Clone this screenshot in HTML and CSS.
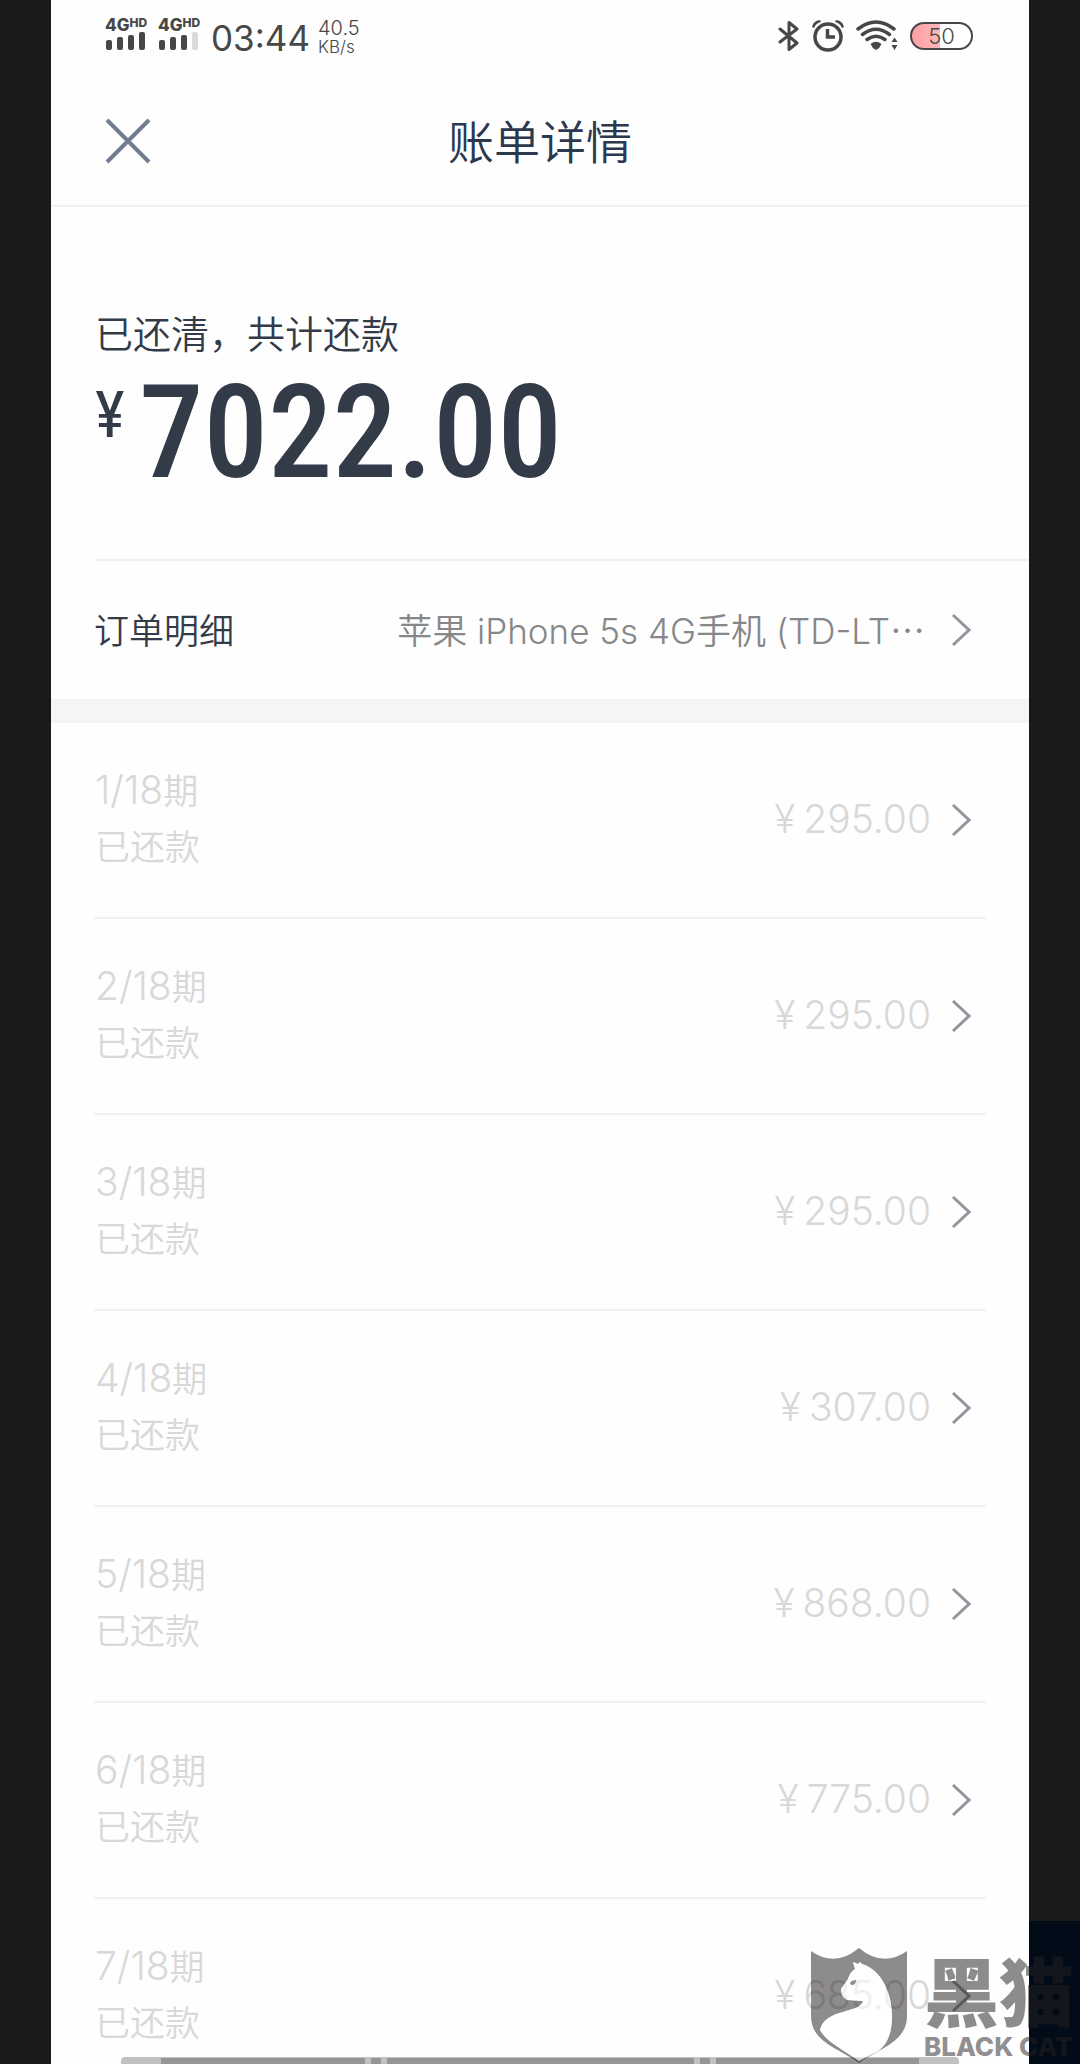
FILE: index.html
```html
<!DOCTYPE html>
<html lang="zh-CN">

<head>
    <meta charset="UTF-8">
    <meta name="viewport" content="width=device-width, initial-scale=1.0">
    <title>账单详情</title>
    <link rel="stylesheet" href="styles.css">
</head>

<body>
    <div class="viewer">
        <div class="screen">
            <div class="status">
                <div class="signal">
                    <span class="net">4G<sup>HD</sup></span>
                    <svg width="42" height="18" viewBox="0 0 42 18" fill="#474747">
                        <rect x="1" y="8" width="6" height="10" rx="2" />
                        <rect x="12" y="5" width="6" height="13" rx="2" />
                        <rect x="23" y="3" width="6" height="15" rx="2" />
                        <rect x="34" y="0" width="6" height="18" rx="2" />
                    </svg>
                </div>
                <div class="signal">
                    <span class="net">4G<sup>HD</sup></span>
                    <svg width="42" height="18" viewBox="0 0 42 18" fill="#474747">
                        <rect x="1" y="8" width="6" height="10" rx="2" />
                        <rect x="12" y="5" width="6" height="13" rx="2" />
                        <rect x="23" y="3" width="6" height="15" rx="2" />
                        <rect x="34" y="0" width="6" height="18" rx="2" fill="#dadada" />
                    </svg>
                </div>
                <span class="time">03:44</span>
                <div class="speed"><span>40.5</span><span class="unit">KB/s</span></div>
                <div class="status-icons">
                    <svg width="22" height="32" viewBox="0 0 22 32" fill="none" stroke="#474747" stroke-width="3" stroke-linejoin="round" stroke-linecap="round">
                        <path d="M2 9L19 23L11 29.500V2.500L19 9L2 22" />
                    </svg>
                    <svg width="32" height="32" viewBox="0 0 32 32" fill="none" stroke="#474747">
                        <circle cx="16" cy="17" r="13" stroke-width="3.500" />
                        <path d="M15.500 9V17H23" stroke-width="3.500" />
                        <path d="M0 7Q1 1 8 0L9 2Q4 3 2 8ZM32 7Q31 1 24 0L23 2Q28 3 30 8Z" fill="#474747" stroke="none" />
                    </svg>
                    <svg width="42" height="32" viewBox="0 0 42 32" fill="none" stroke="#474747" stroke-width="3.500" stroke-linecap="round">
                        <path d="M2 9Q20 -5 38 9M6.500 14.500Q20 4 33.500 14.500M11 19.500Q20 13 29 19.500" />
                        <path d="M14.500 24Q20 19.500 25.500 24Q24 28 20 30Q16 28 14.500 24Z" fill="#474747" stroke="none" />
                        <path d="M35.500 22L38.500 17.500L41.500 22ZM35.500 25H41.500L38.500 30Z" fill="#474747" stroke="none" />
                    </svg>
                    <span class="battery">50</span>
                </div>
            </div>

            <header class="header">
                <button class="close" aria-label="关闭">
                    <svg width="46" height="46" viewBox="0 0 46 46" fill="none" stroke="#737d90" stroke-width="4">
                        <path d="M2 2L44 44M44 2L2 44" />
                    </svg>
                </button>
                <h1>账单详情</h1>
            </header>

            <section class="summary">
                <p class="summary-text">已还清，共计还款</p>
                <p class="total"><span class="yen">¥</span>7022.00</p>
            </section>

            <a class="order" href="#">
                <span class="order-title">订单明细</span>
                <span class="order-name">苹果 iPhone 5s 4G手机 (TD-LT<span class="dots">⋯</span></span>
                <svg class="arrow" width="20" height="34" viewBox="0 0 20 34"><path d="M2 2L18 17L2 32" /></svg>
            </a>

            <ul class="bills">
                <li><a href="#">
                    <span class="period"><b>1/18</b>期<br>已还款</span>
                    <span class="price"><i>¥</i>295.00</span>
                    <svg class="arrow" width="20" height="34" viewBox="0 0 20 34"><path d="M2 2L18 17L2 32" /></svg>
                </a></li>
                <li><a href="#">
                    <span class="period"><b>2/18</b>期<br>已还款</span>
                    <span class="price"><i>¥</i>295.00</span>
                    <svg class="arrow" width="20" height="34" viewBox="0 0 20 34"><path d="M2 2L18 17L2 32" /></svg>
                </a></li>
                <li><a href="#">
                    <span class="period"><b>3/18</b>期<br>已还款</span>
                    <span class="price"><i>¥</i>295.00</span>
                    <svg class="arrow" width="20" height="34" viewBox="0 0 20 34"><path d="M2 2L18 17L2 32" /></svg>
                </a></li>
                <li><a href="#">
                    <span class="period"><b>4/18</b>期<br>已还款</span>
                    <span class="price"><i>¥</i>307.00</span>
                    <svg class="arrow" width="20" height="34" viewBox="0 0 20 34"><path d="M2 2L18 17L2 32" /></svg>
                </a></li>
                <li><a href="#">
                    <span class="period"><b>5/18</b>期<br>已还款</span>
                    <span class="price"><i>¥</i>868.00</span>
                    <svg class="arrow" width="20" height="34" viewBox="0 0 20 34"><path d="M2 2L18 17L2 32" /></svg>
                </a></li>
                <li><a href="#">
                    <span class="period"><b>6/18</b>期<br>已还款</span>
                    <span class="price"><i>¥</i>775.00</span>
                    <svg class="arrow" width="20" height="34" viewBox="0 0 20 34"><path d="M2 2L18 17L2 32" /></svg>
                </a></li>
                <li><a href="#">
                    <span class="period"><b>7/18</b>期<br>已还款</span>
                    <span class="price"><i>¥</i>685.00</span>
                    <svg class="arrow" width="20" height="34" viewBox="0 0 20 34"><path d="M2 2L18 17L2 32" /></svg>
                </a></li>
            </ul>
        </div>

        <div class="corner"></div>

        <div class="bottom-bar">
            <div class="track"><b></b><b></b><b></b><b></b><b></b></div>
        </div>

        <div class="watermark">
            <svg width="98" height="116" viewBox="0 0 98 116">
                <path class="shield" fill-rule="evenodd" d="M1 3Q25 20 49 0Q73 20 97 3V67C97 94 73 98 49 115C25 98 1 94 1 67ZM43 14L48 16L50 14L52 16C72 22 82 46 82 68C82 84 78 96 68 103L49 113L28 99Q15 91 10 82C15 60 50 66 53 53L37 52Q31 49 31 41L38 31Q40 24 45 21Z" />
                <path class="cat" d="M43 14L48 16L50 14L52 16C72 22 82 46 82 68C82 84 78 96 68 103L49 113L28 99Q15 91 10 82C15 60 50 66 53 53L37 52Q31 49 31 41L38 31Q40 24 45 21Z" />
                <path class="shield" d="M40 35Q42 32 46 32Q46 36 43 37Q40 37 40 35Z" />
            </svg>
            <div class="brand">
                <span class="brand-cn">黑猫</span>
                <span class="brand-en">BLACK CAT</span>
            </div>
        </div>
    </div>
</body>

</html>
```
FILE: styles.css
```css
* {
    box-sizing: border-box;
    padding: 0;
    margin: 0;
}

body {
    background: #1a1a1a;
    font-family: Inter, "Noto Sans CJK SC", sans-serif;
    font-weight: 350;
    color: #343b48;
}

ul {
    list-style: none;
}

a {
    color: inherit;
    text-decoration: none;
}

svg {
    display: block;
    flex: none;
}

.viewer {
    position: relative;
    height: 100vh;
    padding: 0 51px;
    overflow: hidden;
}

.screen {
    background: #fefefe;
}

/* status bar */
.status {
    display: flex;
    height: 76px;
    padding: 16px 56px 0 54px;
    color: #474747;
}

.signal {
    width: 42px;
    margin-right: 11px;
}

.net {
    display: flex;
    height: 16px;
    font-size: 17px;
    line-height: 18px;
    font-weight: 800;
}

.net sup {
    font-size: 12px;
    line-height: 13px;
}

.time {
    font-size: 35px;
    line-height: 44px;
    font-weight: 400;
}

.speed {
    display: flex;
    flex-direction: column;
    margin-left: 8px;
    font-size: 20px;
    line-height: 24px;
}

.speed .unit {
    font-size: 17px;
    line-height: 14px;
}

.status-icons {
    display: flex;
    align-items: center;
    gap: 12px;
    height: 40px;
    margin-left: auto;
}

.battery {
    width: 63px;
    height: 28px;
    border: 2px solid #474747;
    border-radius: 14px;
    background: linear-gradient(to right, #ff9ea4, #ffb8ba 48%, #fff 48%);
    font-size: 22px;
    line-height: 24px;
    text-align: center;
}

/* title */
.header {
    display: grid;
    grid-template-columns: 1fr auto 1fr;
    align-items: center;
    height: 131px;
    padding: 0 54px;
    border-bottom: 2px solid #f1f1f2;
}

.close {
    width: 46px;
    height: 46px;
    border: 0;
    background: none;
}

.header h1 {
    padding-bottom: 4px;
    font-size: 46px;
    font-weight: 350;
    color: #2b384d;
}

.summary {
    padding: 97px 44px 0;
    height: 352px;
}

.summary-text {
    font-size: 38px;
    line-height: 60px;
}

.total {
    display: flex;
    font-family: "Roboto Condensed", "Liberation Sans Narrow", Roboto, sans-serif;
    font-size: 129px;
    line-height: 138px;
    font-weight: 500;
}

.yen {
    width: 44px;
    font-size: 64px;
    line-height: 104px;
    font-weight: 400;
}

.order {
    display: flex;
    align-items: center;
    height: 140px;
    margin-left: 43px;
    padding-right: 58px;
    border-top: 2px solid #f1f1f2;
    font-size: 35px;
}

.order span {
    padding-bottom: 4px;
}

.order .order-name {
    margin-left: auto;
    padding-right: 6px;
    color: #868788;
}

.dots {
    font-family: "Noto Sans CJK SC", sans-serif;
}

.arrow {
    margin-left: 20px;
    fill: none;
    stroke: #91959e;
    stroke-width: 3;
}

/* instalments */
.bills {
    padding: 0 43px;
    border-top: 24px solid #f4f5f5;
}

.bills li + li {
    border-top: 2px solid #f1f1f2;
}

.bills a {
    display: flex;
    align-items: center;
    height: 194px;
    padding: 0 15px 0 1px;
    color: #d8d8d9;
}

.period {
    padding-bottom: 4px;
    font-size: 35px;
    line-height: 56px;
}

.period b {
    font-size: 39px;
    font-weight: 300;
}

.price {
    margin-left: auto;
    padding-bottom: 4px;
    font-size: 39px;
    font-weight: 300;
}

.price i {
    font-style: normal;
    margin-right: 8px;
}

/* things lying over the screen */
.corner {
    position: absolute;
    top: 1921px;
    right: 0;
    bottom: 0;
    width: 51px;
    background: #020b18;
}

.bottom-bar {
    position: absolute;
    left: 121px;
    right: 121px;
    bottom: 0;
    height: 7px;
    padding: 1px 40px 0;
    border-radius: 4px 4px 0 0;
    background: #c1c1c1;
}

.track {
    display: grid;
    grid-template-columns: 204px 10px 1fr 10px 203px;
    gap: 6px;
    height: 6px;
}

.track b {
    background: #959595;
}

.watermark {
    position: absolute;
    right: 0;
    bottom: 0;
    display: flex;
    gap: 16px;
    width: 270px;
    height: 116px;
    white-space: nowrap;
    color: rgba(36, 33, 35, .52);
}

.shield {
    fill: rgba(36, 33, 35, .52);
}

.cat {
    fill: rgba(255, 255, 255, .6);
}

.brand {
    display: flex;
    flex-direction: column;
}

.brand-cn {
    font-family: "Noto Sans CJK SC", sans-serif;
    font-size: 75px;
    line-height: 82px;
    font-weight: 900;
}

.brand-en {
    font-size: 26px;
    line-height: 34px;
    font-weight: 800;
}
```
